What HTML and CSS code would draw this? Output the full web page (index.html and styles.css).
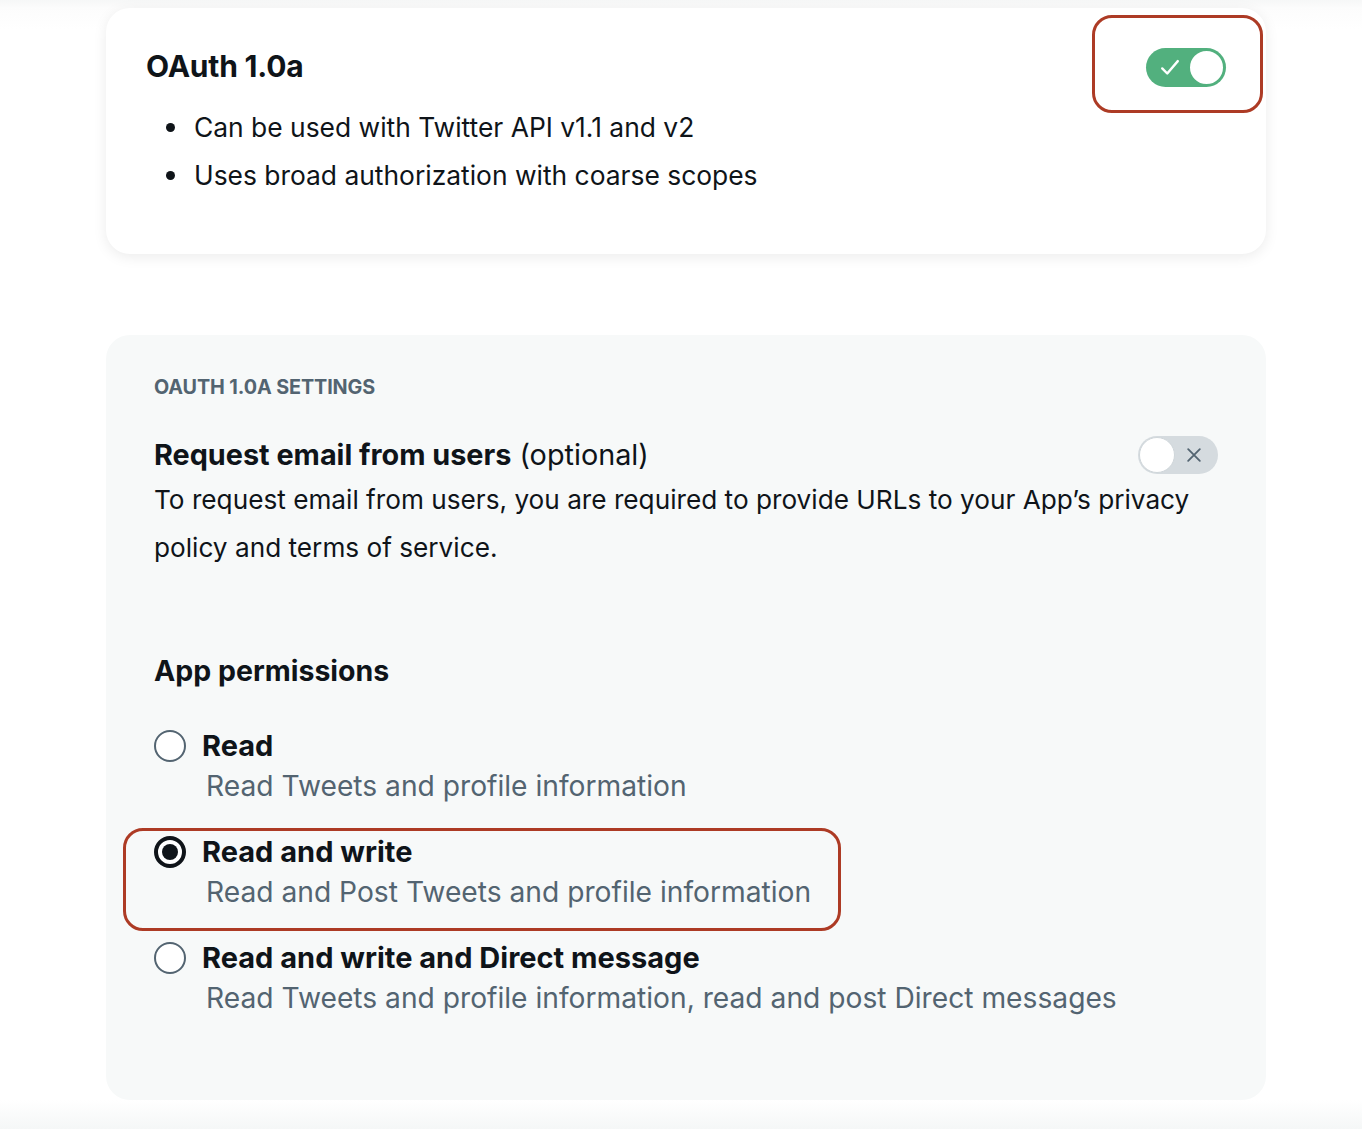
FILE: index.html
```html
<!DOCTYPE html>
<html lang="en">
<head>
<meta charset="utf-8">
<title>OAuth 1.0a settings</title>
<link rel="stylesheet" href="styles.css">
</head>
<body>
<div class="page">
  <section class="card card-auth">
    <div class="auth-main">
      <h2 class="auth-title">OAuth 1.0a</h2>
      <ul class="auth-list">
        <li>Can be used with Twitter API v1.1 and v2</li>
        <li>Uses broad authorization with coarse scopes</li>
      </ul>
    </div>
    <div class="toggle toggle-on" role="switch" aria-checked="true">
      <svg class="toggle-check" viewBox="0 0 24 24" width="24" height="24"><path d="M3.5 12.5l5.5 5.5L20.5 4.5" fill="none" stroke="#fff" stroke-width="2.6" stroke-linecap="round" stroke-linejoin="round"/></svg>
      <span class="knob"></span>
    </div>
    <div class="annot annot-toggle"></div>
  </section>

  <section class="card card-settings">
    <div class="settings-label">OAUTH 1.0A SETTINGS</div>

    <div class="email-row">
      <div class="email-title"><strong>Request email from users</strong> (optional)</div>
      <div class="toggle toggle-off" role="switch" aria-checked="false">
        <span class="knob"></span>
        <svg class="toggle-x" viewBox="0 0 24 24" width="22" height="22"><path d="M5 5l14 14M19 5L5 19" fill="none" stroke="#536471" stroke-width="2.2" stroke-linecap="round"/></svg>
      </div>
    </div>
    <p class="email-desc">To request email from users, you are required to provide URLs to your App’s privacy policy and terms of service.</p>

    <h3 class="perm-title">App permissions</h3>
    <div class="radios">
      <div class="radio-row">
        <span class="radio"></span>
        <div class="radio-text">
          <div class="radio-label">Read</div>
          <div class="radio-desc">Read Tweets and profile information</div>
        </div>
      </div>
      <div class="radio-row">
        <span class="radio radio-checked"></span>
        <div class="radio-text">
          <div class="radio-label">Read and write</div>
          <div class="radio-desc">Read and Post Tweets and profile information</div>
        </div>
      </div>
      <div class="radio-row">
        <span class="radio"></span>
        <div class="radio-text">
          <div class="radio-label">Read and write and Direct message</div>
          <div class="radio-desc">Read Tweets and profile information, read and post Direct messages</div>
        </div>
      </div>
    </div>
    <div class="annot annot-radio"></div>
  </section>
  <div class="bottom-fade"></div>
</div>
</body>
</html>
```

FILE: styles.css
```css
* { box-sizing: border-box; }
html, body {
  margin: 0;
  padding: 0;
  background: #ffffff;
}
body {
  font-family: Inter, "Noto Sans", "Liberation Sans", sans-serif;
  color: #0f1419;
}
.page {
  width: 1362px;
  min-height: 1129px;
  background: linear-gradient(#f6f7f7 0, #fcfcfc 8px, #ffffff 30px);
  padding-top: 8px;
}
.card {
  position: relative;
  margin-left: 106px;
  width: 1160px;
  border-radius: 24px;
}
.card-auth {
  background: #ffffff;
  box-shadow: 0 3px 14px rgba(0, 0, 0, 0.08);
  display: flex;
  justify-content: space-between;
  align-items: flex-start;
  padding: 40px 40px 55px 40px;
  height: 246px;
}
.auth-title {
  margin: 0;
  font-size: 30px;
  line-height: 36px;
  font-weight: 700;
  letter-spacing: -0.2px;
}
.auth-list {
  list-style: none;
  margin: 19px 0 0 0;
  padding: 0;
}
.auth-list li {
  position: relative;
  padding-left: 48px;
  font-size: 26.4px;
  line-height: 48px;
}
.auth-list li::before {
  content: "";
  position: absolute;
  left: 20px;
  top: 20px;
  width: 9px;
  height: 9px;
  border-radius: 50%;
  background: #0f1419;
}
.toggle {
  position: relative;
  width: 80px;
  height: 39px;
  border-radius: 20px;
  display: flex;
  align-items: center;
  flex-shrink: 0;
}
.toggle-on {
  background: #52b07e;
  justify-content: space-between;
  padding: 0 1px 0 13px;
}
.toggle-on .knob {
  width: 37px;
  height: 37px;
  border-radius: 50%;
  background: #fff;
  border: 2px solid #52b07e;
}
.toggle-check { display: block; width: 22px; height: 22px; }
.toggle-off {
  background: #d5dbdf;
  justify-content: space-between;
  padding: 0 14px 0 1px;
  height: 38px;
}
.toggle-off .knob {
  width: 36px;
  height: 36px;
  border-radius: 50%;
  background: #fff;
  border: 1px solid #cfd6da;
}
.toggle-x { display: block; width: 20px; height: 20px; }

.annot {
  position: absolute;
  border: 3px solid #ad3b25;
  border-radius: 20px;
  pointer-events: none;
}
.annot-toggle {
  left: 986px;
  top: 7px;
  width: 171px;
  height: 98px;
}
.annot-radio {
  left: 17px;
  top: 493px;
  width: 718px;
  height: 103px;
}

.card-settings {
  margin-top: 81px;
  background: #f7f9f9;
  padding: 38px 48px 0 48px;
  height: 765px;
}
.settings-label {
  font-size: 19.8px;
  line-height: 28px;
  font-weight: 700;
  color: #536471;
  letter-spacing: -0.1px;
}
.email-row {
  margin-top: 34px;
  display: flex;
  justify-content: space-between;
  align-items: center;
  height: 40px;
}
.email-title {
  font-size: 28.8px;
  line-height: 40px;
}
.email-title strong { font-weight: 700; }
.email-desc {
  margin: 0;
  padding-top: 1px;
  font-size: 26.2px;
  line-height: 47.5px;
}
.perm-title {
  margin: 80px 0 0 0;
  font-size: 28.5px;
  line-height: 40px;
  font-weight: 700;
}
.radios {
  margin-top: 35px;
  display: flex;
  flex-direction: column;
  gap: 26px;
}
.radio-row {
  display: flex;
  align-items: flex-start;
  gap: 16px;
}
.radio {
  margin-top: 4px;
  width: 32px;
  height: 32px;
  border-radius: 50%;
  border: 2px solid #536471;
  background: #ffffff;
  flex-shrink: 0;
  position: relative;
}
.radio-checked {
  border: 4px solid #0f1419;
}
.radio-checked::after {
  content: "";
  position: absolute;
  left: 4px;
  top: 4px;
  width: 16px;
  height: 16px;
  border-radius: 50%;
  background: #0f1419;
}
.radio-label {
  font-size: 29px;
  line-height: 40px;
  font-weight: 700;
}
.radio-desc {
  font-size: 28.2px;
  line-height: 40px;
  color: #536471;
  padding-left: 4px;
}
.bottom-fade {
  height: 29px;
  background: linear-gradient(#ffffff, #f5f7f7);
}
```
